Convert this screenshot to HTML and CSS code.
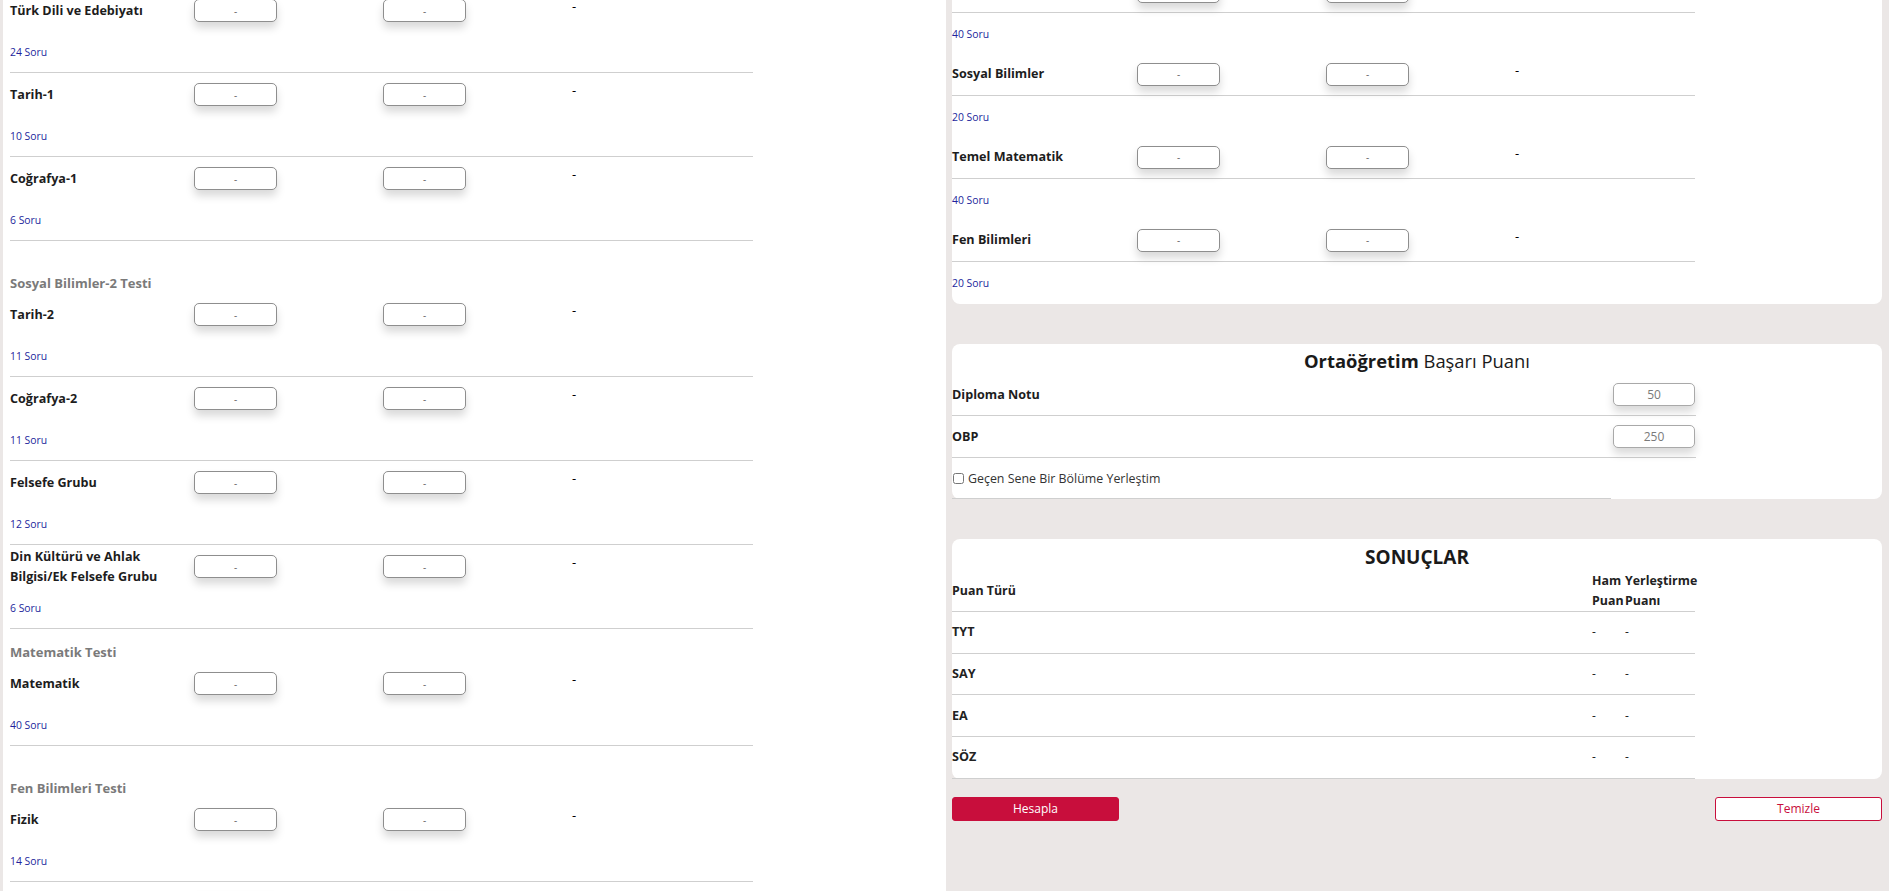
FILE: index.html
```html
<!DOCTYPE html>
<html lang="tr">
<head>
<meta charset="utf-8">
<title>Puan Hesaplama</title>
<link rel="stylesheet" href="styles.css">
</head>
<body>
<div class="page">
  <section class="left-panel">
    <div class="left-list">
      <div class="subj">
        <div class="subj-row"><div class="subj-label">Türk Dili ve Edebiyatı</div><input class="net-input" placeholder="-"><input class="net-input" placeholder="-"><div class="subj-result">-</div></div>
        <div class="soru">24 Soru</div>
      </div>
      <div class="subj">
        <div class="subj-row"><div class="subj-label">Tarih-1</div><input class="net-input" placeholder="-"><input class="net-input" placeholder="-"><div class="subj-result">-</div></div>
        <div class="soru">10 Soru</div>
      </div>
      <div class="subj">
        <div class="subj-row"><div class="subj-label">Coğrafya-1</div><input class="net-input" placeholder="-"><input class="net-input" placeholder="-"><div class="subj-result">-</div></div>
        <div class="soru">6 Soru</div>
      </div>
      <div class="group-title spaced">Sosyal Bilimler-2 Testi</div>
      <div class="subj">
        <div class="subj-row"><div class="subj-label">Tarih-2</div><input class="net-input" placeholder="-"><input class="net-input" placeholder="-"><div class="subj-result">-</div></div>
        <div class="soru">11 Soru</div>
      </div>
      <div class="subj">
        <div class="subj-row"><div class="subj-label">Coğrafya-2</div><input class="net-input" placeholder="-"><input class="net-input" placeholder="-"><div class="subj-result">-</div></div>
        <div class="soru">11 Soru</div>
      </div>
      <div class="subj">
        <div class="subj-row"><div class="subj-label">Felsefe Grubu</div><input class="net-input" placeholder="-"><input class="net-input" placeholder="-"><div class="subj-result">-</div></div>
        <div class="soru">12 Soru</div>
      </div>
      <div class="subj">
        <div class="subj-row"><div class="subj-label">Din Kültürü ve Ahlak Bilgisi/Ek Felsefe Grubu</div><input class="net-input" placeholder="-"><input class="net-input" placeholder="-"><div class="subj-result">-</div></div>
        <div class="soru">6 Soru</div>
      </div>
      <div class="group-title">Matematik Testi</div>
      <div class="subj">
        <div class="subj-row"><div class="subj-label">Matematik</div><input class="net-input" placeholder="-"><input class="net-input" placeholder="-"><div class="subj-result">-</div></div>
        <div class="soru">40 Soru</div>
      </div>
      <div class="group-title spaced">Fen Bilimleri Testi</div>
      <div class="subj">
        <div class="subj-row"><div class="subj-label">Fizik</div><input class="net-input" placeholder="-"><input class="net-input" placeholder="-"><div class="subj-result">-</div></div>
        <div class="soru">14 Soru</div>
      </div>
      <div class="subj">
        <div class="subj-row"><div class="subj-label">Kimya</div><input class="net-input" placeholder="-"><input class="net-input" placeholder="-"><div class="subj-result">-</div></div>
        <div class="soru">13 Soru</div>
      </div>
    </div>
  </section>

  <aside class="right-col">
    <div class="card card-tyt">
      <div class="titem">
        <div class="trow"><div class="subj-label">Türkçe</div><input class="net-input" placeholder="-"><input class="net-input" placeholder="-"><div class="subj-result">-</div></div>
        <div class="soru">40 Soru</div>
      </div>
      <div class="titem">
        <div class="trow"><div class="subj-label">Sosyal Bilimler</div><input class="net-input" placeholder="-"><input class="net-input" placeholder="-"><div class="subj-result">-</div></div>
        <div class="soru">20 Soru</div>
      </div>
      <div class="titem">
        <div class="trow"><div class="subj-label">Temel Matematik</div><input class="net-input" placeholder="-"><input class="net-input" placeholder="-"><div class="subj-result">-</div></div>
        <div class="soru">40 Soru</div>
      </div>
      <div class="titem">
        <div class="trow"><div class="subj-label">Fen Bilimleri</div><input class="net-input" placeholder="-"><input class="net-input" placeholder="-"><div class="subj-result">-</div></div>
        <div class="soru">20 Soru</div>
      </div>
    </div>

    <div class="card card-obp">
      <div class="card-title"><b>Ortaöğretim</b> Başarı Puanı</div>
      <div class="obp-row"><div class="subj-label">Diploma Notu</div><input class="net-input obp-input" placeholder="50"></div>
      <div class="obp-row"><div class="subj-label">OBP</div><input class="net-input obp-input" placeholder="250"></div>
      <div class="obp-check"><label class="check-label"><input type="checkbox" class="check-box">Geçen Sene Bir Bölüme Yerleştim</label></div>
    </div>

    <div class="card card-res">
      <div class="card-title bold">SONUÇLAR</div>
      <div class="res-row res-head"><div>Puan Türü</div><div>Ham Puan</div><div>Yerleştirme Puanı</div></div>
      <div class="res-row"><div class="res-type">TYT</div><div>-</div><div>-</div></div>
      <div class="res-row"><div class="res-type">SAY</div><div>-</div><div>-</div></div>
      <div class="res-row"><div class="res-type">EA</div><div>-</div><div>-</div></div>
      <div class="res-row"><div class="res-type">SÖZ</div><div>-</div><div>-</div></div>
    </div>

    <div class="actions">
      <button class="btn btn-primary">Hesapla</button>
      <button class="btn btn-outline">Temizle</button>
    </div>
  </aside>
</div>
</body>
</html>
```

FILE: styles.css
```css
* { box-sizing: border-box; }

html, body {
  margin: 0;
  padding: 0;
  height: 100%;
}

body {
  background: #ebe7e6;
  font-family: "Open Sans", "Noto Sans", "Liberation Sans", sans-serif;
  color: #1f1f1f;
  overflow: hidden;
}

.page {
  display: grid;
  grid-template-columns: 943px 930px;
  column-gap: 6px;
  padding: 0 7px 0 3px;
  height: 891px;
  overflow: hidden;
  align-items: start;
}

/* ---------- left panel ---------- */
.left-panel {
  background: #fff;
  height: 891px;
  padding-left: 7px;
  overflow: hidden;
}

.left-list {
  width: 743px;
  margin-top: -11px;
}

.subj {
  border-bottom: 1px solid #cfcfcf;
  padding-bottom: 10px;
}

.subj-row,
.trow {
  display: grid;
  grid-template-columns: 184px 189px 189px 1fr;
  align-items: center;
  height: 43px;
}

.subj-label {
  font-size: 12.6px;
  font-weight: 700;
  line-height: 20px;
  color: #1d1d1d;
  padding-right: 24px;
}

.subj-result {
  font-size: 13px;
  font-weight: 400;
  line-height: 20px;
  color: #000;
  margin-bottom: 9px;
}

.net-input {
  width: 83px;
  height: 23px;
  border: 1px solid #8e8e8e;
  border-radius: 5px;
  background: #fff;
  text-align: center;
  font-family: "Open Sans", "Noto Sans", "Liberation Sans", sans-serif;
  font-size: 10px;
  color: #555;
  padding: 0;
  box-shadow: 0 6px 8px rgba(0, 0, 0, 0.15);
  outline: none;
}

.net-input::placeholder {
  color: #666;
}

.soru {
  font-size: 10.4px;
  line-height: 20px;
  color: #231f9c;
  margin-top: 10px;
}

.group-title {
  font-size: 13px;
  font-weight: 700;
  line-height: 19px;
  color: #7a7a7a;
  padding-top: 14px;
}

.group-title.spaced {
  padding-top: 33px;
}

/* ---------- right column ---------- */
.right-col {
  display: flex;
  flex-direction: column;
  margin-top: -30px;
}

.card {
  background: #fff;
  border-radius: 8px;
}

.card-tyt {
  padding-bottom: 2px;
  margin-bottom: 40px;
}

.titem {
  width: 743px;
}

.trow {
  grid-template-columns: 185px 189px 189px 1fr;
  height: 43px;
  border-bottom: 1px solid #cfcfcf;
}

.titem .soru {
  margin-top: 11px;
  margin-bottom: 9px;
}

.card-obp {
  padding-top: 3px;
  margin-bottom: 40px;
}

.card-title {
  text-align: center;
  font-size: 18.4px;
  line-height: 27px;
  color: #1a1a1a;
  font-weight: 400;
}

.card-title b,
.card-title.bold {
  font-weight: 700;
}

.obp-row {
  width: 744px;
  display: grid;
  grid-template-columns: 661px 83px;
  align-items: center;
  height: 42px;
  border-bottom: 1px solid #cfcfcf;
}

.obp-input {
  width: 82px;
  font-size: 12px;
  border-color: #a9a9a9;
}

.obp-input::placeholder {
  color: #7a7a7a;
}

.obp-check {
  width: 659px;
  height: 41px;
  display: flex;
  align-items: center;
  border-bottom: 1px solid #cfcfcf;
}

.check-label {
  display: flex;
  align-items: center;
  font-size: 12.4px;
  color: #333;
}

.check-box {
  width: 11px;
  height: 11px;
  margin: 0 4px 0 1px;
}

.card-res {
  padding-top: 4px;
  margin-bottom: 18px;
}

.card-res .card-title {
  font-size: 19px;
  line-height: 28px;
}

.res-row {
  width: 743px;
  display: grid;
  grid-template-columns: 640px 33px 70px;
  align-items: center;
  height: 41.7px;
  border-bottom: 1px solid #cfcfcf;
  font-size: 12px;
  line-height: 20px;
  color: #222;
}

.res-head {
  height: 41px;
  font-weight: 700;
  font-size: 12.4px;
}

.res-type {
  font-weight: 700;
  font-size: 12.6px;
}

.actions {
  display: flex;
  justify-content: space-between;
}

.btn {
  width: 167px;
  height: 24px;
  border-radius: 3px;
  font-family: "Open Sans", "Noto Sans", "Liberation Sans", sans-serif;
  font-size: 12px;
  padding: 0;
  cursor: pointer;
}

.btn-primary {
  background: #c80e3c;
  color: #fff;
  border: 1px solid #c80e3c;
}

.btn-outline {
  background: #fff;
  color: #c80e3c;
  border: 1px solid #c80e3c;
}
```
